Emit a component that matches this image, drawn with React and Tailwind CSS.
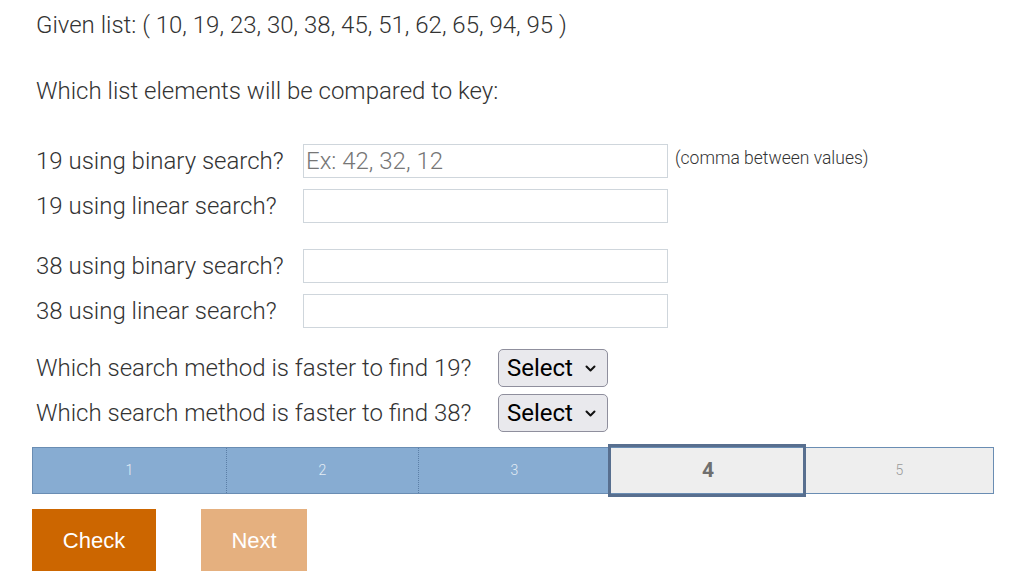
import React from 'react';

const font = { fontFamily: 'Roboto, "Liberation Sans", sans-serif' };

const InputRow = ({ label, placeholder, note }) => (
    <div className="flex items-start">
        <div className="w-[271px] h-[34px] flex items-center pl-1 text-[24px] leading-[28px]">{label}</div>
        <input
            type="text"
            placeholder={placeholder}
            className="w-[365px] h-[34px] px-[2px] border border-[#cfd6dc] bg-white text-[24px] font-light leading-[28px] text-[#333] placeholder:text-[#767676] outline-none"
        />
        {note && <span className="ml-[7px] mt-[4px] text-[17.5px] leading-[20px]">{note}</span>}
    </div>
);

const SelectRow = ({ label }) => (
    <div className="flex items-center h-[38px]">
        <div className="pl-1 w-[466px] text-[24px] leading-[28px]">{label}</div>
        <div className="w-[110px] h-[38px] flex items-center justify-between pl-[8px] pr-[11px] rounded-[5px] border border-[#8f8f9d] bg-[#e9e9ed] text-black font-normal text-[24px] leading-[28px]">
            <span>Select</span>
            <svg width="11" height="7" viewBox="0 0 11 7" fill="none">
                <path d="M1.5 1.5 L5.5 5.5 L9.5 1.5" stroke="#111" strokeWidth="2" strokeLinecap="round" strokeLinejoin="round" />
            </svg>
        </div>
    </div>
);

const widths = ['w-[193px]', 'w-[192px]', 'w-[192px]', 'w-[196px]', 'flex-1'];

export default function App() {
    const segments = [1, 2, 3, 4, 5];
    return (
        <div className="min-h-screen bg-white text-[#333] font-light pl-8 pr-[19px] pt-[11px]" style={font}>
            <p className="pl-1 text-[24px] leading-[28px]">Given list: ( 10, 19, 23, 30, 38, 45, 51, 62, 65, 94, 95 )</p>
            <p className="pl-1 mt-[38px] text-[24px] leading-[28px]">Which list elements will be compared to key:</p>

            <div className="mt-[39px] flex flex-col gap-[11px]">
                <InputRow label="19 using binary search?" placeholder="Ex: 42, 32, 12" note="(comma between values)" />
                <InputRow label="19 using linear search?" />
            </div>
            <div className="mt-[26px] flex flex-col gap-[11px]">
                <InputRow label="38 using binary search?" />
                <InputRow label="38 using linear search?" />
            </div>

            <div className="mt-[21px] flex flex-col gap-[7px]">
                <SelectRow label="Which search method is faster to find 19?" />
                <SelectRow label="Which search method is faster to find 38?" />
            </div>

            <div className="mt-[15px] flex h-[47px] border border-[#6a8db3]">
                {segments.map((n, i) => {
                    const done = n < 4;
                    const current = n === 4;
                    return (
                        <div
                            key={n}
                            className={
                                'relative flex items-center justify-center ' + widths[i] + ' ' +
                                (done ? 'bg-[#87acd2] text-[#e4ecf5] text-[14px] ' : 'bg-[#eeeeee] ') +
                                (n === 2 || n === 3 ? 'border-l border-dotted border-[#5b7ea6] ' : '') +
                                (n === 5 ? 'text-[#9a9a9a] text-[14px] ' : '')
                            }
                        >
                            {current ? (
                                <>
                                    <span className="text-[21px] font-bold text-[#6f6f6f]">4</span>
                                    <div className="absolute -top-[4px] -bottom-[4px] -left-[2px] right-0 border-[3px] border-[#586f8f]" />
                                </>
                            ) : (
                                <span>{n}</span>
                            )}
                        </div>
                    );
                })}
            </div>

            <div className="mt-[15px] flex gap-[45px]" style={{ fontFamily: '"Liberation Sans", Arial, sans-serif' }}>
                <button className="w-[124px] h-[62px] bg-[#cc6600] text-white text-[22px]">Check</button>
                <button className="w-[106px] h-[62px] bg-[#e5b07f] text-white text-[22px]" disabled>Next</button>
            </div>
        </div>
    );
}
